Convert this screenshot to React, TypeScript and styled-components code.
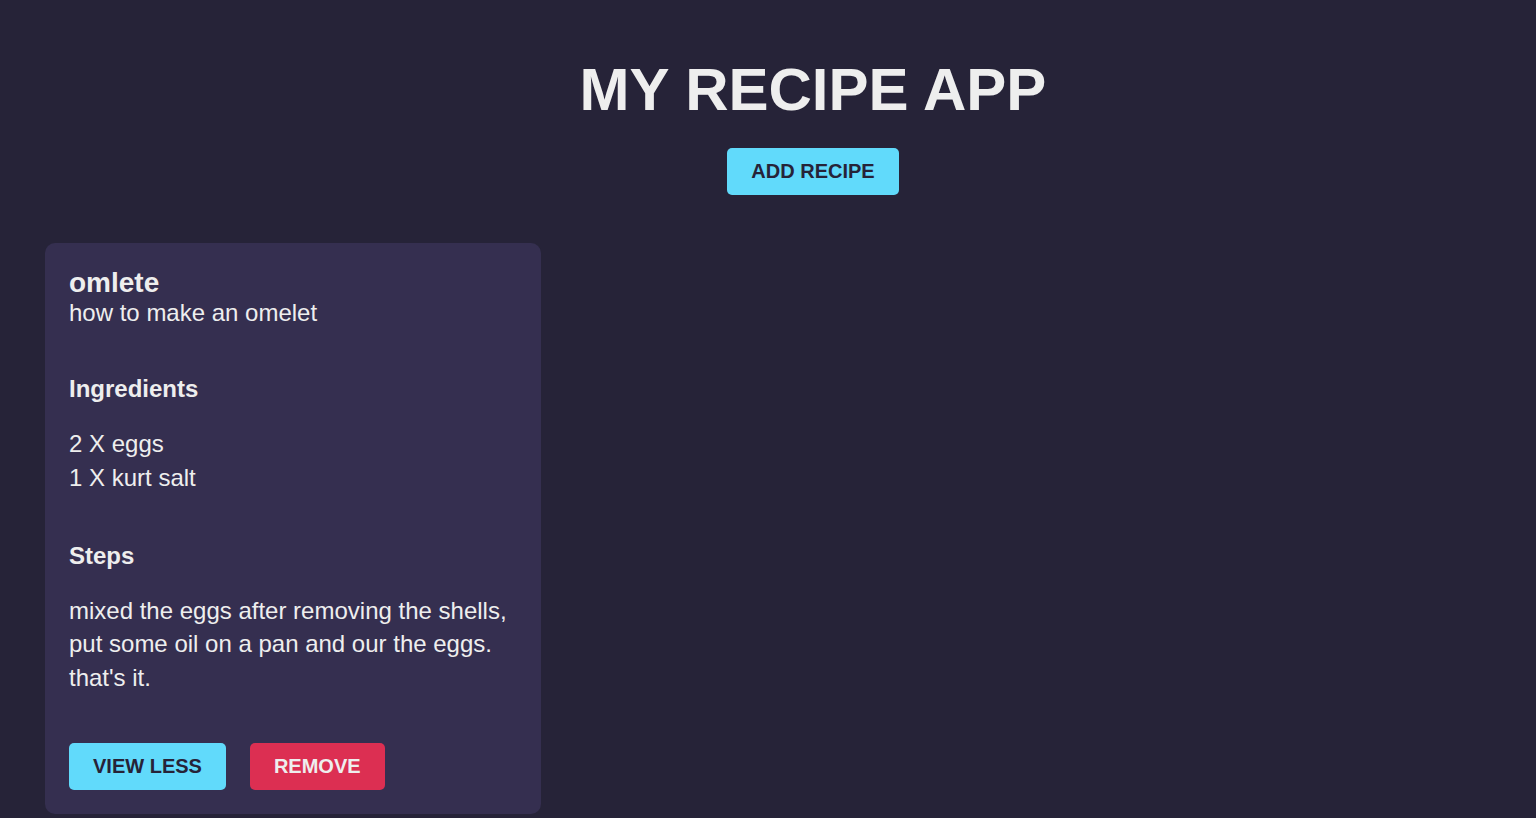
import React from "react";
import styled, { createGlobalStyle } from "styled-components";

const GlobalStyle = createGlobalStyle`
  html, body {
    margin: 0;
    padding: 0;
    overflow: hidden;
    background: #262338;
    font-family: "Liberation Sans", Arial, sans-serif;
    color: #eeeeee;
  }
`;

const Page = styled.main`
  width: 100vw;
  box-sizing: content-box;
  padding: 55px 45px 0 45px;
  min-height: 818px;
`;

const Header = styled.header`
  display: flex;
  flex-direction: column;
  align-items: center;
  gap: 24px;
  margin-bottom: 48px;
`;

const Title = styled.h1`
  margin: 0;
  font-size: 60px;
  font-weight: 700;
  color: #eeeeee;
`;

const Button = styled.button<{ $variant?: "primary" | "danger" }>`
  font-family: inherit;
  font-size: 20px;
  font-weight: 700;
  line-height: 23px;
  padding: 12px 24px;
  border: none;
  border-radius: 5px;
  cursor: pointer;
  background: ${({ $variant }) => ($variant === "danger" ? "#dc2f52" : "#61dafb")};
  color: ${({ $variant }) => ($variant === "danger" ? "#eeeeee" : "#262338")};
`;

const Grid = styled.section`
  display: grid;
  grid-template-columns: repeat(auto-fill, 496px);
  gap: 24px;
`;

const Card = styled.article`
  background: #352f50;
  border-radius: 10px;
  padding: 24px;
  display: flex;
  flex-direction: column;
`;

const RecipeTitle = styled.h2`
  margin: 0;
  font-size: 28px;
  font-weight: 700;
  line-height: 32px;
`;

const Description = styled.p`
  margin: 0;
  font-size: 24px;
  line-height: 27.6px;
`;

const Section = styled.div`
  margin-top: 48px;
  display: flex;
  flex-direction: column;
  gap: 24px;
`;

const SectionTitle = styled.h3`
  margin: 0;
  font-size: 24px;
  font-weight: 700;
  line-height: 27.6px;
`;

const List = styled.ul`
  margin: 1px 0 -1px;
  padding: 0;
  list-style: none;
`;

const Item = styled.li`
  font-size: 24px;
  line-height: 34px;
`;

const Body = styled.p`
  margin: 0;
  font-size: 24px;
  line-height: 33.6px;
`;

const Actions = styled.div`
  margin-top: 48px;
  display: flex;
  gap: 24px;
`;

const recipes = [
  {
    id: 1,
    title: "omlete",
    description: "how to make an omelet",
    ingredients: [
      { amount: 2, name: "eggs" },
      { amount: 1, name: "kurt salt" },
    ],
    steps: "mixed the eggs after removing the shells, put some oil on a pan and our the eggs. that's it.",
  },
];

export default function App() {
  return (
    <>
      <GlobalStyle />
      <Page>
        <Header>
          <Title>MY RECIPE APP</Title>
          <Button>ADD RECIPE</Button>
        </Header>
        <Grid>
          {recipes.map((recipe) => (
            <Card key={recipe.id}>
              <RecipeTitle>{recipe.title}</RecipeTitle>
              <Description>{recipe.description}</Description>
              <Section>
                <SectionTitle>Ingredients</SectionTitle>
                <List>
                  {recipe.ingredients.map((ing) => (
                    <Item key={ing.name}>
                      {ing.amount} X {ing.name}
                    </Item>
                  ))}
                </List>
              </Section>
              <Section>
                <SectionTitle>Steps</SectionTitle>
                <Body>{recipe.steps}</Body>
              </Section>
              <Actions>
                <Button>VIEW LESS</Button>
                <Button $variant="danger">REMOVE</Button>
              </Actions>
            </Card>
          ))}
        </Grid>
      </Page>
    </>
  );
}
